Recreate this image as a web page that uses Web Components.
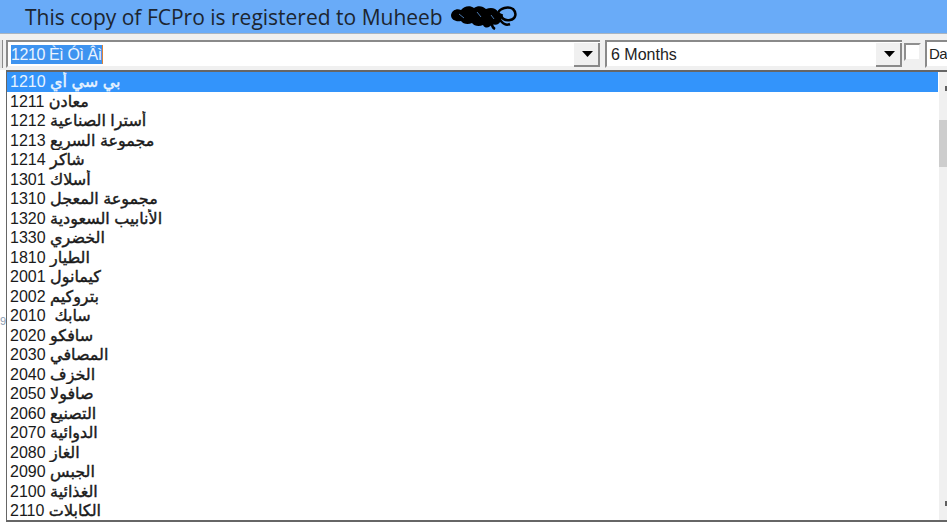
<!DOCTYPE html>
<html><head><meta charset="utf-8">
<style>
html,body{margin:0;padding:0;background:#fff;overflow:hidden}
body{width:947px;height:527px;font-family:"Liberation Sans",sans-serif;display:flex;flex-direction:column}
list-row b{font-weight:normal}
</style></head><body>
<app-banner>This copy of FCPro is registered to Muheeb</app-banner>
<tool-bar>
  <tool-edge></tool-edge>
  <combo-box style="width:594px" selected>1210 Èì Óì Âì</combo-box>
  <combo-box style="width:297px;padding-left:4px">6 Months</combo-box>
  <check-box></check-box>
  <text-field>Da</text-field>
</tool-bar>
<drop-list>
  <list-row active>1210 <b>بي سي أي</b></list-row>
  <list-row>1211 <b>معادن</b></list-row>
  <list-row>1212 <b>أسترا الصناعية</b></list-row>
  <list-row>1213 <b>مجموعة السريع</b></list-row>
  <list-row>1214 <b>شاكر</b></list-row>
  <list-row>1301 <b>أسلاك</b></list-row>
  <list-row>1310 <b>مجموعة المعجل</b></list-row>
  <list-row>1320 <b>الأنابيب السعودية</b></list-row>
  <list-row>1330 <b>الخضري</b></list-row>
  <list-row>1810 <b>الطيار</b></list-row>
  <list-row>2001 <b>كيمانول</b></list-row>
  <list-row>2002 <b>بتروكيم</b></list-row>
  <list-row>2010  <b>سابك</b></list-row>
  <list-row>2020 <b>سافكو</b></list-row>
  <list-row>2030 <b>المصافي</b></list-row>
  <list-row>2040 <b>الخزف</b></list-row>
  <list-row>2050 <b>صافولا</b></list-row>
  <list-row>2060 <b>التصنيع</b></list-row>
  <list-row>2070 <b>الدوائية</b></list-row>
  <list-row>2080 <b>الغاز</b></list-row>
  <list-row>2090 <b>الجبس</b></list-row>
  <list-row>2100 <b>الغذائية</b></list-row>
  <list-row>2110 <b>الكابلات</b></list-row>
</drop-list>
<gutter-mark>9</gutter-mark>
<script>
function def(name,html){
  customElements.define(name,class extends HTMLElement{
    connectedCallback(){
      if(this.shadowRoot)return;
      this.attachShadow({mode:'open'}).innerHTML=html;
    }
  });
}
def('app-banner',`<style>
:host{display:flex;align-items:center;height:34px;box-sizing:border-box;padding:2px 0 0 25px;background:#69abf8;color:#1c2530;font:21px/31px "Open Sans",sans-serif;flex:none;gap:7px;border-bottom:1px solid #a9b4c0}
svg{display:block}
</style><slot></slot><svg width="68" height="25" viewBox="0 0 68 25" fill="#000" stroke="#000"><path stroke="none" d="M1 10C2 5 7 3 11 5 14 1 20 0 24 3 28 0 33 1 36 4 41 2 46 3 48 7 52 8 53 12 51 15 50 19 46 21 42 19 40 23 35 24 33 20 29 22 24 21 22 18 18 20 13 19 11 16 6 17 1 15 1 10Z"/><path fill="none" stroke-width="2.500" d="M48 8C50 3 58 1 63 4 67 8 66 14 60 15 55 16 50 13 52 9M50 15c3 3 5 6 10 4M42 19c0 2 1 4 3 5"/><path fill="none" stroke="#69abf8" stroke-width=".7" d="M9 9l5 4M27 7l4 5M41 10l3 4"/></svg>`);
def('tool-bar',`<style>
:host{display:flex;align-items:flex-start;gap:5px;height:36px;box-sizing:border-box;padding:6px 0 0 0;background:#f0f0f0;flex:none;overflow:hidden}
</style><slot></slot>`);
def('tool-edge',`<style>
:host{display:block;box-sizing:border-box;width:3px;height:28px;margin-right:-2px;border-right:1px solid #8a8a8a;background:#e4e4e4;flex:none}
</style>`);
def('combo-box',`<style>
:host{display:flex;box-sizing:border-box;height:28px;border:2px solid #8a8a8a;border-right:0;border-bottom-color:#f0f0f0;background:#fff;font:16px/26px "Liberation Sans",sans-serif;color:#222;flex:none;padding:1px 0 0 3px}
.t{flex:1;white-space:nowrap;overflow:hidden;line-height:23px}
:host([selected]) .s{background:#3d93f0;color:#eaf4ff;border-right:1px solid #d9833b;letter-spacing:-.4px;padding:1px 0}
button{all:unset;box-sizing:border-box;width:26px;height:24px;background:#f0f0f0;border-right:2px solid #8a8a8a;border-bottom:2px solid #8a8a8a;display:flex;align-items:center;justify-content:center;padding-left:3px}
svg{display:block}
</style><div class="t"><span class="s"><slot></slot></span></div><button><svg width="11" height="6" viewBox="0 0 11 6"><path d="M0 0h11L5.500 6z" fill="#000"/></svg></button>`);
def('check-box',`<style>
:host{display:block;box-sizing:border-box;width:17px;height:18px;margin:3px 0 0 -3px;background:#fff;border:2px solid #8f8f8f;border-right-color:#f0f0f0;border-bottom-color:#f0f0f0;flex:none}
</style>`);
def('text-field',`<style>
:host{display:block;box-sizing:border-box;width:22px;height:28px;margin-left:-1px;border:2px solid #8a8a8a;border-right:0;border-bottom-color:#f0f0f0;background:#fff;font:15px/24px "Liberation Sans",sans-serif;letter-spacing:-.6px;color:#222;padding-left:2px;flex:none;white-space:nowrap}
</style><slot></slot>`);
def('drop-list',`<style>
:host{display:flex;box-sizing:border-box;width:941px;height:452px;margin-left:6px;border-top:2px solid #666;border-left:1px solid #666;border-bottom:2px solid #666;background:#fff;flex:none;overflow:hidden}
.rows{flex:1;min-width:0;padding-right:1px}
.bar{width:8px;background:#f0f0f0;position:relative;display:flex;flex-direction:column;align-items:flex-end;justify-content:space-between;padding:14px 0 14px;box-sizing:border-box}
.a{width:2px;height:5px;background:#606060}
.thumb{position:absolute;left:0;right:0;top:48px;height:47px;background:#cdcdcd}
</style><div class="rows"><slot></slot></div><div class="bar"><div class="a"></div><div class="thumb"></div><div class="a"></div></div>`);
def('list-row',`<style>
:host{display:block;height:19.500px;box-sizing:border-box;padding-left:3px;font:16px/19.500px "Liberation Sans","DejaVu Sans",sans-serif;color:#1a1a1a;white-space:pre;overflow:hidden}
:host([active]){background:#3394fb;color:#e8f3ff}
::slotted(b){-webkit-text-stroke:.4px currentColor;font-weight:normal}
</style><slot></slot>`);
def('gutter-mark',`<style>
:host{position:absolute;left:0;top:315px;width:6px;font:11px/13px "Liberation Sans",sans-serif;color:#8a9cb2}
</style><slot></slot>`);
</script>
</body></html>
